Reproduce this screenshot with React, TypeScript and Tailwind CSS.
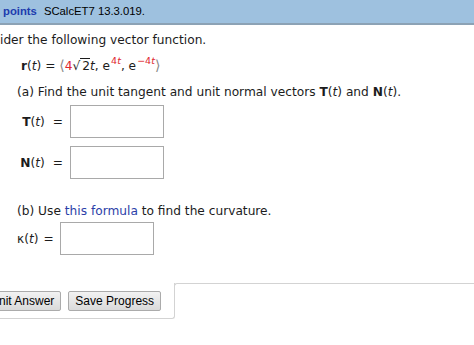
const body = { fontFamily: '"DejaVu Sans", Verdana, sans-serif' };
const ui = { fontFamily: '"Liberation Sans", Arial, sans-serif' };

function AnswerBox({ className = '' }: { className?: string }) {
  return (
    <div
      className={`h-[33px] w-[94px] border border-[#a9a9a9] bg-white ${className}`}
    />
  );
}

function Sup({ children }: { children: React.ReactNode }) {
  return (
    <span className="relative top-[-6px] ml-[1px] text-[9.5px] leading-none text-[#e0262e]">
      {children}
    </span>
  );
}

export default function App() {
  return (
    <div className="relative h-[345px] w-[474px] overflow-hidden bg-white text-[#1c1c1c]">
      <div
        className="flex h-[25px] items-center border-b-2 border-[#8ca2b5] bg-[#9ec1df] pl-[3px] text-[11.3px]"
        style={ui}
      >
        <span className="font-bold text-[#1d3cae]">points</span>
        <span className="ml-[7px] text-black">SCalcET7 13.3.019.</span>
      </div>

      <div className="text-[12.2px] leading-[16px]" style={body}>
        <p className="mt-[7px]">ider the following vector function.</p>

        <p className="mt-[9px] pl-[21px]">
          <b>r</b>(<i>t</i>) = <span className="text-[14px] text-[#8a8a8a]">⟨</span>
          <span className="text-[#e0262e]">4</span>
          <span>√</span>
          <span className="border-t border-[#1c1c1c] pl-[2px]">2</span>
          <i>t</i>, e<Sup>4<i>t</i></Sup>, e
          <Sup>
            −4<i>t</i>
          </Sup>
          <span className="text-[14px] text-[#8a8a8a]">⟩</span>
        </p>

        <p className="mt-[10px] pl-[17px]">
          (a) Find the unit tangent and unit normal vectors <b>T</b>(<i>t</i>) and{' '}
          <b>N</b>(<i>t</i>).
        </p>

        <div className="mt-[5px] flex items-center">
          <div className="flex w-[63px] justify-end">
            <span>
              <b>T</b>(<i>t</i>)
            </span>
            <span className="ml-[8px]">=</span>
          </div>
          <AnswerBox className="ml-[7px]" />
        </div>

        <div className="mt-[8px] flex items-center">
          <div className="flex w-[63px] justify-end">
            <span>
              <b>N</b>(<i>t</i>)
            </span>
            <span className="ml-[8px]">=</span>
          </div>
          <AnswerBox className="ml-[7px]" />
        </div>

        <p className="mt-[24px] pl-[17px]">
          (b) Use <span className="text-[#2b3ea8]">this formula</span> to find the curvature.
        </p>

        <div className="mt-[3px] flex items-center pl-[17px]">
          <span>
            κ(<i>t</i>)
          </span>
          <span className="ml-[5px]">=</span>
          <AnswerBox className="ml-[6px]" />
        </div>

        <div className="mt-[28px] flex">
          <div className="flex gap-[7px] rounded-br-[3px] border-r border-b border-[#d3d3d3] pt-[8px] pr-[13px] pb-[7px]">
            <button
              className="-ml-[8px] h-[20px] rounded-[2px] border border-[#ababab] bg-gradient-to-b from-[#f2f2f2] to-[#dadada] px-[6px] text-[12px] text-black"
              style={ui}
            >
              nit Answer
            </button>
            <button
              className="h-[20px] rounded-[2px] border border-[#ababab] bg-gradient-to-b from-[#f2f2f2] to-[#dadada] px-[6px] text-[12px] text-black"
              style={ui}
            >
              Save Progress
            </button>
          </div>
          <div className="-ml-px h-[4px] flex-1 rounded-tl-[3px] border-t border-l border-[#d3d3d3]" />
        </div>
      </div>
    </div>
  );
}
